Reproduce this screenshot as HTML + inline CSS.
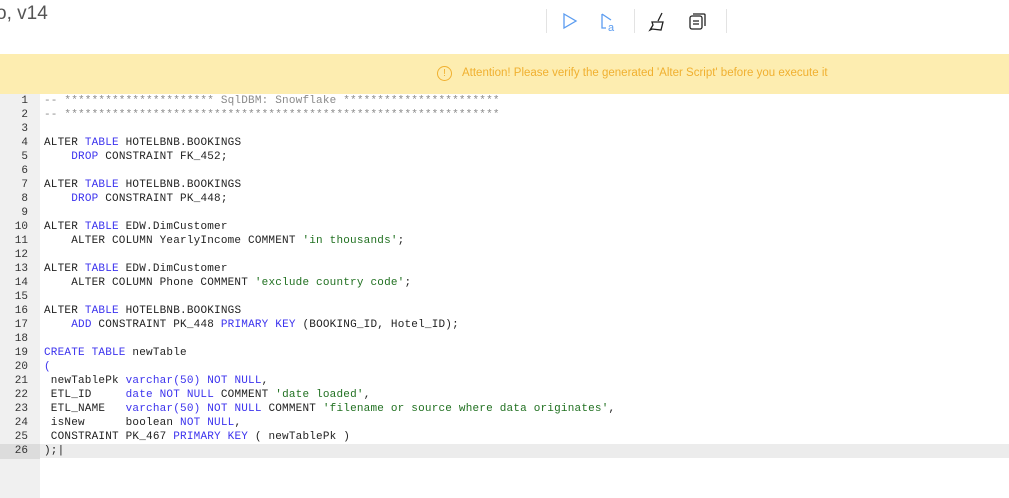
<!DOCTYPE html>
<html><head><meta charset="utf-8"><style>
body{margin:0;width:1009px;height:498px;overflow:hidden;background:#fff;font-family:"Liberation Sans",sans-serif;position:relative}
.title{position:absolute;left:-4px;top:3px;font-size:19px;color:#555}
.sep{position:absolute;top:9px;width:1px;height:24px;background:#e3e3e3}
.banner{position:absolute;left:0;top:54px;width:1009px;height:40px;background:#fdedb0;color:#f0b030;font-size:11.5px}
.banner span{position:absolute;left:462px;top:13px}
.banner .ic{position:absolute;left:437px;top:12px;width:13px;height:13px;border:1px solid #f0b030;border-radius:50%;font-size:10px;text-align:center;line-height:13px}
.gut{position:absolute;left:0;top:94px;width:40px;height:404px;background:#f0f0f0}
.code{position:absolute;left:0;top:94px;width:1009px;font-family:"Liberation Mono",monospace;font-size:11px}
.l{height:14px;line-height:15px;white-space:pre;position:relative;color:#222;letter-spacing:0.2px}
.l b{font-weight:normal;display:inline-block;width:28px;text-align:right;color:#333;margin-right:16px;letter-spacing:0}
.l.cur{background:#ececec}
.l.cur b{background:#dcdcdc;width:40px;margin-right:4px;box-sizing:border-box;padding-right:12px}
.k{color:#3c33ee}.s{color:#207020}.c{color:#8a8a8a}
</style></head><body>
<div class="title">o, v14</div>
<div class="sep" style="left:546px"></div><div class="sep" style="left:634px"></div><div class="sep" style="left:726px"></div>
<svg style="position:absolute;left:560px;top:10px" width="180" height="24" viewBox="0 0 180 24">
<path d="M4 4 L16 11 L4 18 Z" fill="none" stroke="#5b9cf0" stroke-width="1.3"/>
<path d="M42 4 L51 10 M42 4 V18 H46" fill="none" stroke="#5b9cf0" stroke-width="1.3"/>
<text x="48" y="21" font-size="11" fill="#5b9cf0" font-family="Liberation Sans">a</text>
<path d="M102 3 L98 11 M92 12 L103 12 L101 20 L92 19 L90 20 L93 15 Z" fill="none" stroke="#222" stroke-width="1.3"/>
<rect x="130" y="6" width="12" height="13" rx="2" fill="none" stroke="#222" stroke-width="1.3"/>
<path d="M133 4 H144 a1 1 0 0 1 1 1 V16" fill="none" stroke="#222" stroke-width="1.3"/>
<path d="M133 11 H139 M133 14 H139" stroke="#222" stroke-width="1.2"/>
</svg>
<div class="banner"><div class="ic">!</div><span>Attention! Please verify the generated 'Alter Script' before you execute it</span></div>
<div class="gut"></div>
<div class="code">
<div class="l"><b>1</b><span class="c">-- ********************** SqlDBM: Snowflake ***********************</span></div>
<div class="l"><b>2</b><span class="c">-- ****************************************************************</span></div>
<div class="l"><b>3</b></div>
<div class="l"><b>4</b>ALTER <span class="k">TABLE</span> HOTELBNB.BOOKINGS</div>
<div class="l"><b>5</b>    <span class="k">DROP</span> CONSTRAINT FK_452;</div>
<div class="l"><b>6</b></div>
<div class="l"><b>7</b>ALTER <span class="k">TABLE</span> HOTELBNB.BOOKINGS</div>
<div class="l"><b>8</b>    <span class="k">DROP</span> CONSTRAINT PK_448;</div>
<div class="l"><b>9</b></div>
<div class="l"><b>10</b>ALTER <span class="k">TABLE</span> EDW.DimCustomer</div>
<div class="l"><b>11</b>    ALTER COLUMN YearlyIncome COMMENT <span class="s">'in thousands'</span>;</div>
<div class="l"><b>12</b></div>
<div class="l"><b>13</b>ALTER <span class="k">TABLE</span> EDW.DimCustomer</div>
<div class="l"><b>14</b>    ALTER COLUMN Phone COMMENT <span class="s">'exclude country code'</span>;</div>
<div class="l"><b>15</b></div>
<div class="l"><b>16</b>ALTER <span class="k">TABLE</span> HOTELBNB.BOOKINGS</div>
<div class="l"><b>17</b>    <span class="k">ADD</span> CONSTRAINT PK_448 <span class="k">PRIMARY KEY</span> (BOOKING_ID, Hotel_ID);</div>
<div class="l"><b>18</b></div>
<div class="l"><b>19</b><span class="k">CREATE TABLE</span> newTable</div>
<div class="l"><b>20</b><span class="k">(</span></div>
<div class="l"><b>21</b> newTablePk <span class="k">varchar(50) NOT NULL</span>,</div>
<div class="l"><b>22</b> ETL_ID     <span class="k">date NOT NULL</span> COMMENT <span class="s">'date loaded'</span>,</div>
<div class="l"><b>23</b> ETL_NAME   <span class="k">varchar(50) NOT NULL</span> COMMENT <span class="s">'filename or source where data originates'</span>,</div>
<div class="l"><b>24</b> isNew      boolean <span class="k">NOT NULL</span>,</div>
<div class="l"><b>25</b> CONSTRAINT PK_467 <span class="k">PRIMARY KEY</span> ( newTablePk )</div>
<div class="l cur"><b>26</b>);|</div>
</div>
</body></html>
